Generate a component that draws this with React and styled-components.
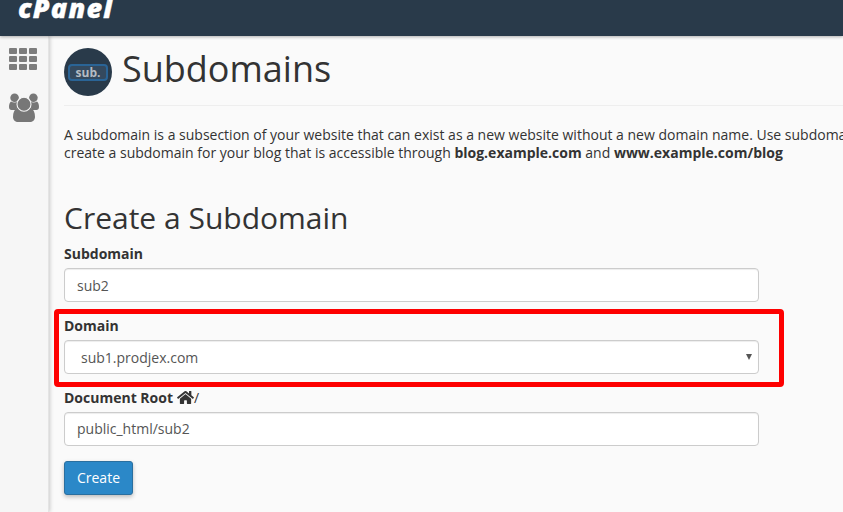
import React from "react";
import styled, { createGlobalStyle } from "styled-components";
import { FaHome } from "react-icons/fa";

const Global = createGlobalStyle`
  html, body { margin: 0; padding: 0; width: 843px; height: 512px; overflow: hidden; background: #fafafa; }
  * { box-sizing: border-box; }
  body { font-family: "Open Sans", "Liberation Sans", sans-serif; font-size: 14px; color: #333; }
`;

const Page = styled.div`
  width: 843px; height: 512px; display: flex; flex-direction: column; overflow: hidden;
`;
const Header = styled.header`
  flex: 0 0 36px; background: #293a4a; overflow: hidden; padding-left: 18px;
  box-shadow: 0 1px 3px rgba(0,0,0,.3); position: relative; z-index: 2;
`;
const Logo = styled.div`
  font-family: "Open Sans", sans-serif; font-style: italic; font-weight: 800; font-size: 27px;
  line-height: 29px; color: #fff; margin-top: -7px; letter-spacing: 1.2px;
  -webkit-text-stroke: 0.4px #fff;
`;
const Body = styled.div`
  flex: 1; display: flex; min-height: 0;
`;
const Sidebar = styled.nav`
  flex: 0 0 49px; background: #f6f6f6; border-right: 1px solid #e4e4e4;
  box-shadow: 1px 0 4px rgba(0,0,0,.2); display: flex; flex-direction: column;
  align-items: flex-start; padding: 12px 0 0 9px; gap: 23px; position: relative;
`;
const GridIcon = styled.div`
  display: grid; grid-template-columns: repeat(3, 8px); grid-auto-rows: 6px; gap: 2px;
`;
const Cell = styled.span`
  background: #7d7d7d; border-radius: 1px;
`;
const Main = styled.main`
  flex: 1; min-width: 0; padding: 12px 0 0 15px; overflow: hidden;
`;
const TitleRow = styled.div`
  display: flex; align-items: center; gap: 10px; height: 48px;
`;
const Badge = styled.div`
  width: 48px; height: 48px; border-radius: 50%; background: #293a4a;
  display: flex; align-items: center; justify-content: center;
`;
const BadgeInner = styled.span`
  width: 40px; height: 17px; border: 2px solid #2a6496; border-radius: 4px; background: #34495e;
  color: #b4bcc4; font-size: 12px; font-weight: 700; line-height: 13px; text-align: center;
`;
const Title = styled.h1`
  margin: -6px 0 0; font-size: 36px; font-weight: 400; line-height: 42px; color: #333;
`;
const Rule = styled.hr`
  margin: 9px 0 0; border: 0; border-top: 1px solid #eee;
`;
const Intro = styled.p`
  margin: 20px 0 0; line-height: 18px; white-space: nowrap; font-size: 14px; color: #333;
  b { font-weight: 700; }
`;
const Heading = styled.h2`
  margin: 38px 0 0; font-size: 30px; font-weight: 400; line-height: 36px; color: #333;
`;
const Form = styled.form`
  width: 695px; margin-top: 8px;
`;
const Group = styled.div`
  position: relative; margin-bottom: 14px;
`;
const LastGroup = styled(Group)`
  margin-bottom: 0;
`;
const Label = styled.label`
  display: flex; align-items: center; height: 18px; margin-bottom: 6px; font-weight: 700; color: #333; font-size: 14px;
`;
const HomeGlyph = styled(FaHome)`
  width: 17px; height: 15px; margin-left: 4px; color: #333;
`;
const Slash = styled.span`
  font-weight: 400;
`;
const Input = styled.input`
  display: block; width: 100%; height: 34px; padding: 6px 12px; border: 1px solid #ccc; border-radius: 4px;
  background: #fff; color: #555; font: 400 14px "Open Sans", sans-serif;
  box-shadow: inset 0 1px 1px rgba(0,0,0,.075);
`;
const RootInput = styled(Input)`
  padding: 5px 12px 6px;
`;
const SelectBox = styled.div`
  position: relative; height: 34px; padding: 0 12px 0 16px; border: 1px solid #ccc; border-radius: 4px;
  background: #fff; color: #555; line-height: 33px; font-size: 14px;
  box-shadow: inset 0 1px 1px rgba(0,0,0,.075);
`;
const Caret = styled.span`
  position: absolute; right: 6px; top: 13px; width: 0; height: 0;
  border-left: 3px solid transparent; border-right: 3px solid transparent; border-top: 6px solid #555;
`;
const Highlight = styled.div`
  position: absolute; left: -10px; top: -7px; right: -25px; bottom: -13px;
  border: 5px solid #fe0000; border-radius: 4px; pointer-events: none;
`;
const Button = styled.button`
  display: block; width: 69px; height: 34px; margin-top: 15px; border: 1px solid #2a6f9f; border-radius: 3px;
  background: #2b88c8; color: #fff; font: 400 14px "Open Sans", sans-serif;
  box-shadow: 0 2px 4px rgba(0,0,0,.25); padding: 0 0 2px;
`;

const UsersIcon = () => (
  <svg width="30" height="30" viewBox="0 0 30 30" aria-hidden="true">
    <g fill="#777">
      <circle cx="5.6" cy="4.800" r="4.300" />
      <circle cx="24.400" cy="4.800" r="4.300" />
      <path d="M0 14c0-2.500.6-4.500 2-5.500 2 1.300 5 1.300 7 0 1 .6 1.700 1.500 2 2.500-2 2-3 3.500-4 6H2.500C1 17 0 16 0 14z" />
      <path d="M30 14c0-2.500-.6-4.500-2-5.500-2 1.300-5 1.300-7 0-1 .6-1.700 1.500-2 2.500 2 2 3 3.500 4 6h4.500c1.500 0 2.500-1 2.500-3z" />
      <path d="M4 24c0-4.500 1.500-8 4.500-9.500 3.500 3.800 9.500 3.800 13 0 3 1.500 4.500 5 4.500 9.500 0 3-2.500 5-5 5H9c-2.500 0-5-2-5-5z" />
      <circle cx="15" cy="11.200" r="7" stroke="#f6f6f6" strokeWidth="1.100" />
    </g>
  </svg>
);

export default function App() {
  return (
    <Page>
      <Global />
      <Header><Logo>cPanel</Logo></Header>
      <Body>
        <Sidebar>
          <GridIcon>{Array.from({ length: 9 }, (_, i) => <Cell key={i} />)}</GridIcon>
          <UsersIcon />
        </Sidebar>
        <Main>
          <TitleRow>
            <Badge><BadgeInner>sub.</BadgeInner></Badge>
            <Title>Subdomains</Title>
          </TitleRow>
          <Rule />
          <Intro>
            A subdomain is a subsection of your website that can exist as a new website without a new domain name. Use subdomains to<br />
            create a subdomain for your blog that is accessible through <b>blog.example.com</b> and <b>www.example.com/blog</b>
          </Intro>
          <Heading>Create a Subdomain</Heading>
          <Form>
            <Group>
              <Label>Subdomain</Label>
              <Input defaultValue="sub2" />
            </Group>
            <Group>
              <Label>Domain</Label>
              <SelectBox>sub1.prodjex.com<Caret /></SelectBox>
              <Highlight />
            </Group>
            <LastGroup>
              <Label>Document Root<HomeGlyph /><Slash>/</Slash></Label>
              <RootInput defaultValue="public_html/sub2" />
            </LastGroup>
            <Button type="button">Create</Button>
          </Form>
        </Main>
      </Body>
    </Page>
  );
}
